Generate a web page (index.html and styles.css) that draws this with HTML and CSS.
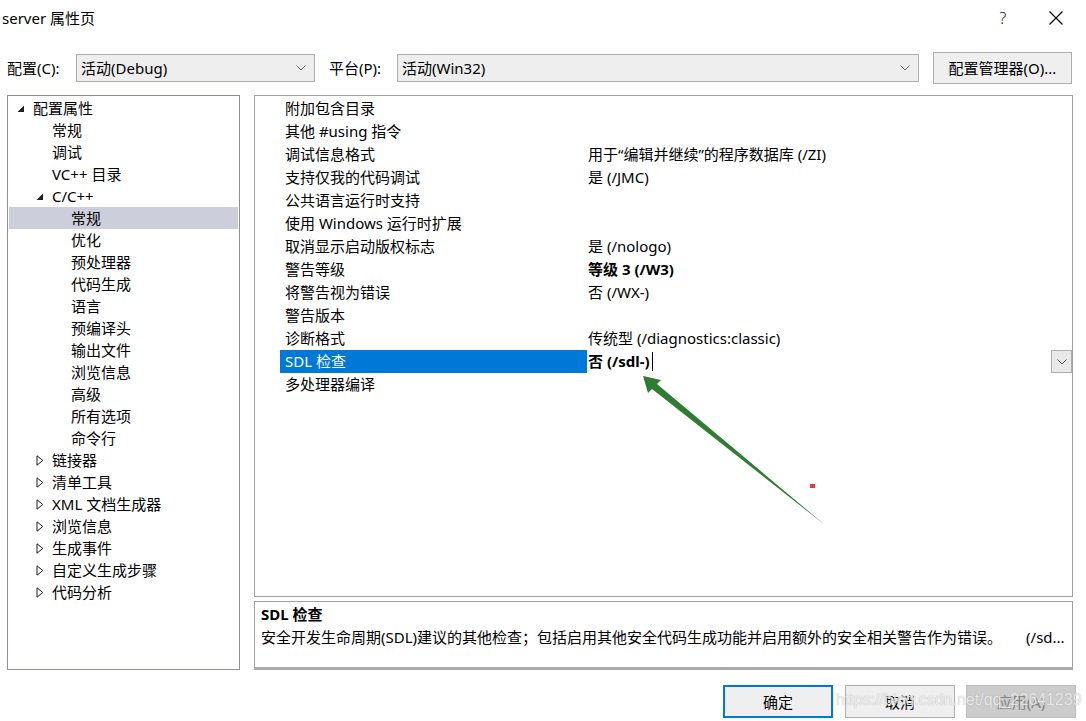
FILE: index.html
```html
<!DOCTYPE html>
<html lang="zh-CN">
<head>
<meta charset="utf-8">
<title>server 属性页</title>
<link rel="stylesheet" href="styles.css">
</head>
<body>
<div class="window">
  <div class="titlebar">
    <span class="title">server 属性页</span>
    <span class="spacer"></span>
    <span class="tb-btn help">?</span>
    <span class="tb-btn close"><svg width="14" height="14" viewBox="0 0 14 14"><path d="M0.5 0.5 L13.5 13.5 M13.5 0.5 L0.5 13.5" stroke="#000" stroke-width="1.1" fill="none"/></svg></span>
  </div>

  <div class="toolbar">
    <span class="lbl lbl-config">配置(C):</span>
    <div class="combo combo-config"><span>活动(Debug)</span><svg class="chev" width="10" height="6" viewBox="0 0 10 6"><path d="M0.5 0.5 L5 5 L9.5 0.5" stroke="#666" fill="none"/></svg></div>
    <span class="lbl lbl-platform">平台(P):</span>
    <div class="combo combo-platform"><span>活动(Win32)</span><svg class="chev" width="10" height="6" viewBox="0 0 10 6"><path d="M0.5 0.5 L5 5 L9.5 0.5" stroke="#666" fill="none"/></svg></div>
    <button class="btn btn-manager">配置管理器(O)...</button>
  </div>

  <div class="main">
    <div class="tree">
      <div class="node l0"><span class="twisty"><svg width="8" height="8" viewBox="0 0 8 8"><polygon points="7,0.5 7,7 0.5,7" fill="#1e1e1e"/></svg></span>配置属性</div>
      <div class="node l1"><span class="twisty"></span>常规</div>
      <div class="node l1"><span class="twisty"></span>调试</div>
      <div class="node l1"><span class="twisty"></span>VC++ 目录</div>
      <div class="node l1"><span class="twisty"><svg width="8" height="8" viewBox="0 0 8 8"><polygon points="7,0.5 7,7 0.5,7" fill="#1e1e1e"/></svg></span>C/C++</div>
      <div class="node l2 selected"><span class="twisty"></span>常规</div>
      <div class="node l2"><span class="twisty"></span>优化</div>
      <div class="node l2"><span class="twisty"></span>预处理器</div>
      <div class="node l2"><span class="twisty"></span>代码生成</div>
      <div class="node l2"><span class="twisty"></span>语言</div>
      <div class="node l2"><span class="twisty"></span>预编译头</div>
      <div class="node l2"><span class="twisty"></span>输出文件</div>
      <div class="node l2"><span class="twisty"></span>浏览信息</div>
      <div class="node l2"><span class="twisty"></span>高级</div>
      <div class="node l2"><span class="twisty"></span>所有选项</div>
      <div class="node l2"><span class="twisty"></span>命令行</div>
      <div class="node l1"><span class="twisty"><svg class="closed" width="8" height="11" viewBox="0 0 8 11"><polygon points="1,0.8 6.8,5.5 1,10.2" fill="none" stroke="#1e1e1e"/></svg></span>链接器</div>
      <div class="node l1"><span class="twisty"><svg class="closed" width="8" height="11" viewBox="0 0 8 11"><polygon points="1,0.8 6.8,5.5 1,10.2" fill="none" stroke="#1e1e1e"/></svg></span>清单工具</div>
      <div class="node l1"><span class="twisty"><svg class="closed" width="8" height="11" viewBox="0 0 8 11"><polygon points="1,0.8 6.8,5.5 1,10.2" fill="none" stroke="#1e1e1e"/></svg></span>XML 文档生成器</div>
      <div class="node l1"><span class="twisty"><svg class="closed" width="8" height="11" viewBox="0 0 8 11"><polygon points="1,0.8 6.8,5.5 1,10.2" fill="none" stroke="#1e1e1e"/></svg></span>浏览信息</div>
      <div class="node l1"><span class="twisty"><svg class="closed" width="8" height="11" viewBox="0 0 8 11"><polygon points="1,0.8 6.8,5.5 1,10.2" fill="none" stroke="#1e1e1e"/></svg></span>生成事件</div>
      <div class="node l1"><span class="twisty"><svg class="closed" width="8" height="11" viewBox="0 0 8 11"><polygon points="1,0.8 6.8,5.5 1,10.2" fill="none" stroke="#1e1e1e"/></svg></span>自定义生成步骤</div>
      <div class="node l1"><span class="twisty"><svg class="closed" width="8" height="11" viewBox="0 0 8 11"><polygon points="1,0.8 6.8,5.5 1,10.2" fill="none" stroke="#1e1e1e"/></svg></span>代码分析</div>
    </div>

    <div class="right">
      <div class="grid">
        <div class="row"><span class="name">附加包含目录</span><span class="value"></span></div>
        <div class="row"><span class="name">其他 #using 指令</span><span class="value"></span></div>
        <div class="row"><span class="name">调试信息格式</span><span class="value">用于“编辑并继续”的程序数据库 (/ZI)</span></div>
        <div class="row"><span class="name">支持仅我的代码调试</span><span class="value">是 (/JMC)</span></div>
        <div class="row"><span class="name">公共语言运行时支持</span><span class="value"></span></div>
        <div class="row"><span class="name">使用 Windows 运行时扩展</span><span class="value"></span></div>
        <div class="row"><span class="name">取消显示启动版权标志</span><span class="value">是 (/nologo)</span></div>
        <div class="row"><span class="name">警告等级</span><span class="value bold">等级 3 (/W3)</span></div>
        <div class="row"><span class="name">将警告视为错误</span><span class="value">否 (/WX-)</span></div>
        <div class="row"><span class="name">警告版本</span><span class="value"></span></div>
        <div class="row"><span class="name">诊断格式</span><span class="value">传统型 (/diagnostics:classic)</span></div>
        <div class="row active"><span class="name">SDL 检查</span><span class="value bold"><span class="val-text">否 (/sdl-)</span><span class="caret"></span><span class="dd"><svg width="10" height="6" viewBox="0 0 10 6"><path d="M0.5 0.5 L5 5 L9.5 0.5" stroke="#555" fill="none"/></svg></span></span></div>
        <div class="row"><span class="name">多处理器编译</span><span class="value"></span></div>
      </div>
      <div class="desc">
        <div class="desc-title">SDL 检查</div>
        <div class="desc-text">安全开发生命周期(SDL)建议的其他检查；包括启用其他安全代码生成功能并启用额外的安全相关警告作为错误。<span class="desc-more">(/sd...</span></div>
      </div>
    </div>
  </div>

  <div class="footer">
    <button class="btn btn-ok">确定</button>
    <button class="btn btn-cancel">取消</button>
    <button class="btn btn-apply">应用(A)</button>
  </div>

  <svg class="arrow" width="1086" height="721" viewBox="0 0 1086 721">
    <polygon points="643,376 661,380 657,384 825,525 652,389 648,393" fill="#2e7d32"/>
    <rect x="810" y="484" width="5" height="4" fill="#e53935"/>
  </svg>
  <div class="watermark">https://blog.csdn.net/qq_22641239</div>
</div>
</body>
</html>
```

FILE: styles.css
```css
* { box-sizing: border-box; }

html, body {
  margin: 0;
  padding: 0;
  background: #ffffff;
}

body {
  font-family: "Noto Sans", "Noto Sans CJK SC", sans-serif;
  font-size: 15px;
  color: #000;
}

.window {
  position: relative;
  width: 1086px;
  height: 721px;
  overflow: hidden;
  background: #ffffff;
}

/* title bar */
.titlebar {
  height: 36px;
  display: flex;
  align-items: center;
  padding-left: 2px;
}
.title { font-size: 15px; line-height: 20px; }
.spacer { flex: 1; }
.tb-btn {
  display: flex;
  justify-content: center;
  align-items: center;
  height: 36px;
}
.help { font-size: 16px; color: #111; width: 46px; margin-right: 7px; font-weight: 300; }
.close { width: 46px; margin-right: 7px; }

/* toolbar */
.toolbar {
  margin-top: 16px;
  height: 32px;
  display: flex;
  align-items: center;
  padding-left: 7px;
}
.lbl { line-height: 20px; }
.lbl-config { width: 69px; }
.lbl-platform { width: 68px; margin-left: 14px; }
.combo {
  height: 28px;
  background: #eeeeee;
  border: 1px solid #adadad;
  display: flex;
  align-items: center;
  padding-left: 4px;
  padding-right: 8px;
}
.combo span { flex: 1; line-height: 20px; }
.combo-config { width: 239px; }
.combo-platform { width: 522px; }

.btn {
  font-family: "Noto Sans", "Noto Sans CJK SC", sans-serif;
  font-size: 15px;
  color: #000;
  background: #efefef;
  border: 1px solid #adadad;
  padding: 0;
  line-height: 20px;
}
.btn-manager {
  width: 139px;
  height: 32px;
  margin-left: 14px;
}

/* main area */
.main {
  margin-top: 11px;
  height: 575px;
  display: flex;
  padding-left: 7px;
}

.tree {
  width: 233px;
  height: 575px;
  border: 1px solid #8e8f99;
  padding: 1px;
  background: #fff;
}
.node {
  height: 22px;
  line-height: 22px;
  display: flex;
  align-items: center;
  white-space: nowrap;
  padding-left: 8px;
}
.node.l1 { padding-left: 27px; }
.node.l2 { padding-left: 46px; }
.node.selected { background: #cccedb; }
.twisty {
  width: 16px;
  height: 22px;
  display: flex;
  align-items: center;
  flex: none;
}
.twisty svg { display: block; margin-top: 1px; }

.right {
  margin-left: 14px;
  width: 819px;
  display: flex;
  flex-direction: column;
}

.grid {
  height: 502px;
  border: 1px solid #a0a0a0;
  padding-top: 1px;
  background: #fff;
}
.row {
  height: 23px;
  display: flex;
  align-items: stretch;
  padding-left: 25px;
}
.name {
  width: 304px;
  padding-left: 5px;
  line-height: 23px;
  white-space: nowrap;
}
.value {
  flex: 1;
  padding-left: 4px;
  line-height: 23px;
  white-space: nowrap;
  display: flex;
  align-items: center;
}
.bold { font-weight: bold; }
.row.active .name { background: #0078d7; color: #fff; }
.row.active .value { border-left: 3px solid #0078d7; padding-left: 1px; }
.caret {
  width: 1px;
  height: 19px;
  background: #000;
  margin-left: 2px;
}
.dd {
  margin-left: auto;
  width: 21px;
  height: 23px;
  border: 1px solid #adadad;
  background: #e9e9e9;
  display: flex;
  align-items: center;
  justify-content: center;
}

.desc {
  margin-top: 4px;
  height: 69px;
  border: 1px solid #a0a0a0;
  border-bottom: 3px solid #a9a9a9;
  padding: 1px 0 0 6px;
  background: #fff;
}
.desc-title { font-weight: bold; line-height: 23px; }
.desc-text { line-height: 23px; white-space: nowrap; }
.desc-more { margin-left: 24px; }

/* footer */
.footer {
  display: flex;
  padding-top: 15px;
  padding-left: 723px;
}
.footer .btn { width: 110px; height: 33px; }
.btn-ok { border: 2px solid #0078d7; }
.btn-cancel { margin-left: 12px; }
.btn-apply {
  margin-left: 11px;
  background: #cccccc;
  border-color: #bfbfbf;
  color: #838383;
}

/* overlays */
.arrow {
  position: absolute;
  left: 0;
  top: 0;
  pointer-events: none;
}
.watermark {
  position: absolute;
  left: 836px;
  top: 691px;
  font-family: "Liberation Sans", sans-serif;
  font-size: 16px;
  color: rgba(255, 255, 255, 0.75);
  text-shadow: 0 0 1px rgba(120, 120, 120, 0.6);
  white-space: nowrap;
  pointer-events: none;
}
```
